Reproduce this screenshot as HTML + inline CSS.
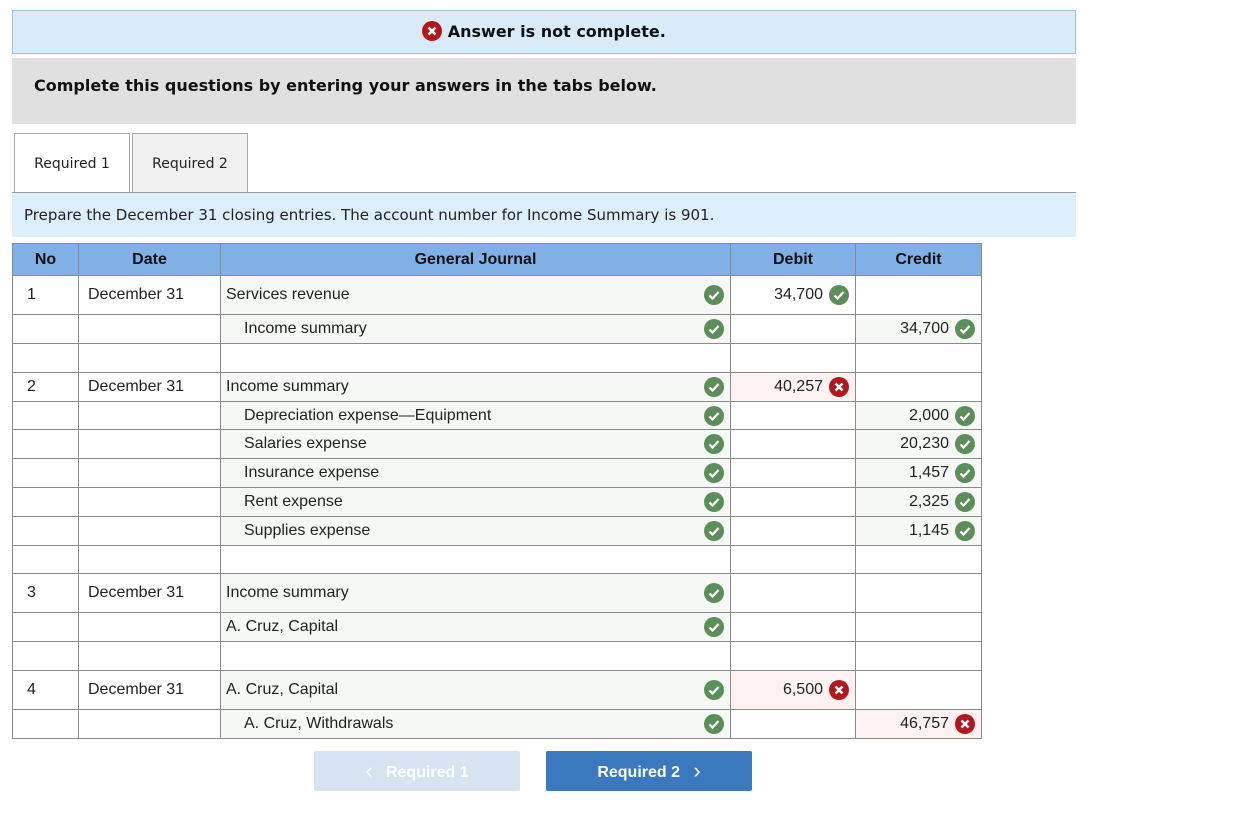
<!DOCTYPE html>
<html><head><style>
body{margin:0;width:1250px;height:825px;background:#fff;font-family:"Liberation Sans",Arial,sans-serif;position:relative;overflow:hidden}
.v{font-family:"DejaVu Sans",Verdana,sans-serif}
#top{position:absolute;left:12px;top:10px;width:1062px;height:42px;background:#d9ebf8;border:1px solid #9cc1da;text-align:center;font-weight:bold;font-size:16px;line-height:42px;color:#111}
#gray{position:absolute;left:12px;top:58px;width:1064px;height:66px;background:#e0e0e0;font-weight:bold;font-size:16px;color:#111}
#gray span{position:absolute;left:22px;top:18px}
.tab{position:absolute;top:133px;height:59px;border:1px solid #aaa;font-size:14px;line-height:60px;text-align:center;color:#222}
#line{position:absolute;left:12px;top:192px;width:1064px;border-top:1px solid #999}
#instr{position:absolute;left:12px;top:193px;width:1064px;height:44px;background:#dceefa;font-size:15px;line-height:44px;color:#222}
table{position:absolute;left:12px;top:243px;border-collapse:collapse;font-size:16px;color:#222}
td,th{border:1px solid #8a8a8a;padding:0;position:relative}
th{background:#7fb0e6;height:31px;font-size:16px;font-weight:bold;color:#111}
.sh{background:#f6f8f6}
.red{background:#fdf1f1}
.n{text-align:right;padding-right:32px}
.ic{position:absolute;right:6px;top:50%;margin-top:-10px;width:20px;height:20px}
.btn{position:absolute;top:751px;height:40px;width:206px;font-weight:bold;font-size:16px;line-height:40px;text-align:center;color:#fff;border-radius:2px}
.btn b{font-size:22px;font-weight:normal;vertical-align:-1px}
</style></head><body>
<svg width="0" height="0" style="position:absolute"><defs>
<symbol id="ok" viewBox="0 0 20 20"><circle cx="10" cy="10" r="10" fill="#5b8e59"/><path d="M5.5 10.5l3 3 6-6.5" stroke="#fff" stroke-width="2.2" fill="none"/></symbol>
<symbol id="no" viewBox="0 0 20 20"><circle cx="10" cy="10" r="10" fill="#b5161b"/><path d="M6.5 6.5l7 7M13.5 6.5l-7 7" stroke="#fff" stroke-width="2.6"/></symbol>
</defs></svg>
<div id="top" class="v"><svg width="20" height="20" style="vertical-align:-4px"><use href="#no"/></svg> Answer is not complete.</div>
<div id="gray" class="v"><span>Complete this questions by entering your answers in the tabs below.</span></div>
<div class="tab v" style="left:14px;width:114px;background:#fff;border-bottom:none;height:60px">Required 1</div>
<div class="tab v" style="left:132px;width:114px;background:#f0f0f0">Required 2</div>
<div id="line"></div>
<div id="instr" class="v"><span style="padding-left:12px">Prepare the December 31 closing entries. The account number for Income Summary is 901.</span></div>
<table>
<tr><th style="width:65px">No</th><th style="width:141px">Date</th><th style="width:509px">General Journal</th><th style="width:124px">Debit</th><th style="width:125px">Credit</th></tr>
<tr style="height:39px"><td style="padding-left:14px">1</td><td style="padding-left:9px">December 31</td><td class="sh" style="padding-left:5px">Services revenue<svg class="ic"><use href="#ok"/></svg></td><td class="n">34,700<svg class="ic"><use href="#ok"/></svg></td><td></td></tr>
<tr style="height:29px"><td></td><td></td><td class="sh" style="padding-left:23px">Income summary<svg class="ic"><use href="#ok"/></svg></td><td></td><td class="n sh">34,700<svg class="ic"><use href="#ok"/></svg></td></tr>
<tr style="height:29px"><td></td><td></td><td></td><td></td><td></td></tr>
<tr style="height:29px"><td style="padding-left:14px">2</td><td style="padding-left:9px">December 31</td><td class="sh" style="padding-left:5px">Income summary<svg class="ic"><use href="#ok"/></svg></td><td class="n red">40,257<svg class="ic"><use href="#no"/></svg></td><td></td></tr>
<tr style="height:28px"><td></td><td></td><td class="sh" style="padding-left:23px">Depreciation expense—Equipment<svg class="ic"><use href="#ok"/></svg></td><td></td><td class="n sh">2,000<svg class="ic"><use href="#ok"/></svg></td></tr>
<tr style="height:29px"><td></td><td></td><td class="sh" style="padding-left:23px">Salaries expense<svg class="ic"><use href="#ok"/></svg></td><td></td><td class="n sh">20,230<svg class="ic"><use href="#ok"/></svg></td></tr>
<tr style="height:29px"><td></td><td></td><td class="sh" style="padding-left:23px">Insurance expense<svg class="ic"><use href="#ok"/></svg></td><td></td><td class="n sh">1,457<svg class="ic"><use href="#ok"/></svg></td></tr>
<tr style="height:29px"><td></td><td></td><td class="sh" style="padding-left:23px">Rent expense<svg class="ic"><use href="#ok"/></svg></td><td></td><td class="n sh">2,325<svg class="ic"><use href="#ok"/></svg></td></tr>
<tr style="height:29px"><td></td><td></td><td class="sh" style="padding-left:23px">Supplies expense<svg class="ic"><use href="#ok"/></svg></td><td></td><td class="n sh">1,145<svg class="ic"><use href="#ok"/></svg></td></tr>
<tr style="height:28px"><td></td><td></td><td></td><td></td><td></td></tr>
<tr style="height:39px"><td style="padding-left:14px">3</td><td style="padding-left:9px">December 31</td><td class="sh" style="padding-left:5px">Income summary<svg class="ic"><use href="#ok"/></svg></td><td></td><td></td></tr>
<tr style="height:29px"><td></td><td></td><td class="sh" style="padding-left:5px">A. Cruz, Capital<svg class="ic"><use href="#ok"/></svg></td><td></td><td></td></tr>
<tr style="height:29px"><td></td><td></td><td></td><td></td><td></td></tr>
<tr style="height:39px"><td style="padding-left:14px">4</td><td style="padding-left:9px">December 31</td><td class="sh" style="padding-left:5px">A. Cruz, Capital<svg class="ic"><use href="#ok"/></svg></td><td class="n red">6,500<svg class="ic"><use href="#no"/></svg></td><td></td></tr>
<tr style="height:29px"><td></td><td></td><td class="sh" style="padding-left:23px">A. Cruz, Withdrawals<svg class="ic"><use href="#ok"/></svg></td><td></td><td class="n red">46,757<svg class="ic"><use href="#no"/></svg></td></tr>
</table>
<div class="btn" style="left:314px;background:#d6e3f1"><b>&lsaquo;</b>&nbsp;&nbsp; Required 1</div>
<div class="btn" style="left:546px;background:#3a78bf">Required 2 &nbsp;&nbsp;<b>&rsaquo;</b></div>
</body></html>
